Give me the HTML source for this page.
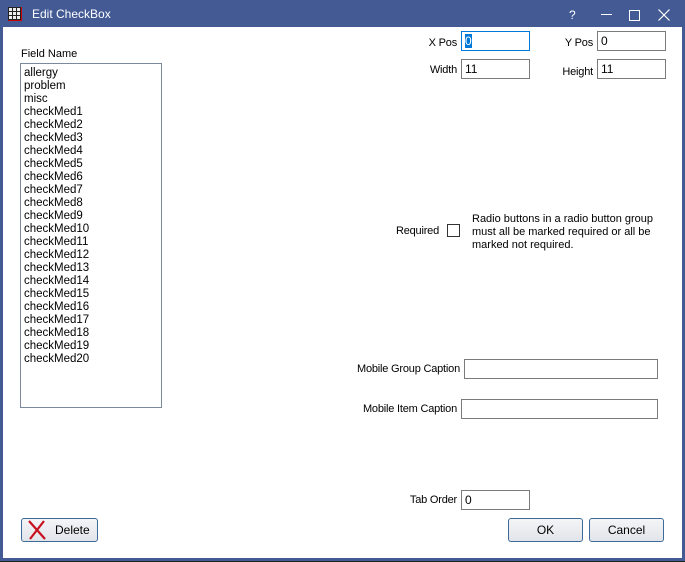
<!DOCTYPE html>
<html><head><style>
*{margin:0;padding:0;box-sizing:border-box}
body{width:685px;height:562px;overflow:hidden;background:#435a95;font-family:"Liberation Sans",Arial,sans-serif;font-size:11px;color:#000;position:relative}
#win{position:absolute;left:3px;top:27px;width:679px;height:531px;background:#fff}
#bot{position:absolute;left:0;top:561px;width:685px;height:1px;background:#222}
.a{position:absolute;white-space:nowrap}
.r{position:absolute;white-space:nowrap;text-align:right;letter-spacing:-0.2px}
.tb{position:absolute;border:1px solid #7a7a7a;background:#fff;height:20px;padding:2px 3px;font-size:12px}
.btn{position:absolute;border:1px solid #3c6b9a;border-radius:3px;background:linear-gradient(#f4f5f7,#e1e4e9);height:24px;text-align:center;line-height:22px;font-size:12px}
.lst{position:absolute;left:20px;top:63px;width:142px;height:345px;border:1px solid #7a8a9a;padding:3px 3px;font-size:11.5px;line-height:13px}
</style></head><body>
<div class="a" style="left:8px;top:7px;width:14px;height:14px;background:#fff;border-right:1px solid #c00;border-bottom:1px solid #c00">
<svg width="13" height="13" style="display:block"><rect width="13" height="13" fill="#222"/><g fill="#eee"><rect x="1" y="1" width="3" height="3"/><rect x="5" y="1" width="3" height="3"/><rect x="9" y="1" width="3" height="3"/><rect x="1" y="5" width="3" height="3"/><rect x="5" y="5" width="3" height="3"/><rect x="9" y="5" width="3" height="3"/><rect x="1" y="9" width="3" height="3"/><rect x="5" y="9" width="3" height="3"/><rect x="9" y="9" width="3" height="3"/></g></svg></div>
<div class="a" style="left:32px;top:7px;color:#fff;font-size:12px">Edit CheckBox</div>
<div class="a" style="left:569px;top:8px;color:#fff;font-size:12px">?</div>
<div class="a" style="left:601px;top:14px;width:11px;height:1px;background:#fff"></div>
<div class="a" style="left:629px;top:10px;width:11px;height:11px;border:1px solid #fff"></div>
<svg class="a" style="left:658px;top:9px" width="12" height="12"><path d="M0.5 0.5L11.5 11.5M11.5 0.5L0.5 11.5" stroke="#fff" stroke-width="1.2"/></svg>
<div id="win"></div><div id="bot"></div>
<div class="a" style="left:21px;top:48px">Field Name</div>
<div class="lst">allergy<br>problem<br>misc<br>checkMed1<br>checkMed2<br>checkMed3<br>checkMed4<br>checkMed5<br>checkMed6<br>checkMed7<br>checkMed8<br>checkMed9<br>checkMed10<br>checkMed11<br>checkMed12<br>checkMed13<br>checkMed14<br>checkMed15<br>checkMed16<br>checkMed17<br>checkMed18<br>checkMed19<br>checkMed20</div>
<div class="r" style="right:228px;top:37px">X Pos</div>
<div class="tb" style="left:461px;top:31px;width:69px;border-color:#0078d7"><span style="background:#0078d7;color:#fff">0</span></div>
<div class="r" style="right:92px;top:37px">Y Pos</div>
<div class="tb" style="left:597px;top:31px;width:69px">0</div>
<div class="r" style="right:228px;top:64px">Width</div>
<div class="tb" style="left:461px;top:59px;width:69px">11</div>
<div class="r" style="right:92px;top:66px">Height</div>
<div class="tb" style="left:597px;top:59px;width:69px">11</div>
<div class="r" style="right:246px;top:225px">Required</div>
<div class="a" style="left:447px;top:224px;width:13px;height:13px;border:1px solid #333"></div>
<div class="a" style="left:472px;top:213px;line-height:13px">Radio buttons in a radio button group<br>must all be marked required or all be<br>marked not required.</div>
<div class="r" style="right:225px;top:363px">Mobile Group Caption</div>
<div class="tb" style="left:464px;top:359px;width:194px"></div>
<div class="r" style="right:228px;top:403px">Mobile Item Caption</div>
<div class="tb" style="left:461px;top:399px;width:197px"></div>
<div class="r" style="right:228px;top:494px">Tab Order</div>
<div class="tb" style="left:461px;top:490px;width:69px">0</div>
<div class="btn" style="left:21px;top:518px;width:77px;text-align:left;padding-left:33px">Delete</div>
<svg class="a" style="left:27px;top:520px" width="20" height="20"><path d="M2 1L18 19M17 1L3 19" stroke="#c8101e" stroke-width="2.2"/></svg>
<div class="btn" style="left:508px;top:518px;width:75px">OK</div>
<div class="btn" style="left:589px;top:518px;width:75px">Cancel</div>
</body></html>
